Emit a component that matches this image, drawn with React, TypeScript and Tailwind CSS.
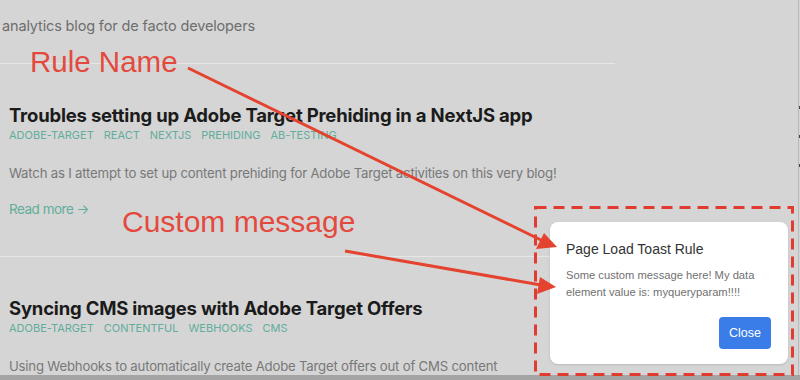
const posts = [
  {
    title: "Troubles setting up Adobe Target Prehiding in a NextJS app",
    tags: ["adobe-target", "react", "nextjs", "prehiding", "ab-testing"],
    summary:
      "Watch as I attempt to set up content prehiding for Adobe Target activities on this very blog!",
    more: true,
  },
  {
    title: "Syncing CMS images with Adobe Target Offers",
    tags: ["adobe-target", "contentful", "webhooks", "cms"],
    summary:
      "Using Webhooks to automatically create Adobe Target offers out of CMS content",
    more: false,
  },
];

function Post({ post }: { post: (typeof posts)[number] }) {
  return (
    <article className="pl-[9px] pt-[39px]">
      <h2 className="text-[18.5px] leading-[24px] font-bold text-[#1b1b1b] tracking-[-0.2px]">
        {post.title}
      </h2>
      <div className="flex gap-[10px] text-[11px] leading-[16px] uppercase text-[#62ad9b]">
        {post.tags.map((tag) => (
          <span key={`tag-${tag}`}>{tag}</span>
        ))}
      </div>
      <p className="mt-[20px] text-[13.2px] leading-[20px] tracking-[-0.2px] text-[#787878]">
        {post.summary}
      </p>
      {post.more && (
        <a className="mt-[16px] block text-[13.5px] leading-[20px] tracking-[-0.5px] text-[#62ad9b]">
          Read more →
        </a>
      )}
    </article>
  );
}

function Toast() {
  return (
    <div
      className="absolute left-[550px] top-[222px] flex h-[142px] w-[238px] flex-col rounded-[8px] bg-white pl-[16px] pr-[17px] pt-[18px] pb-[15px] shadow-sm"
      style={{ fontFamily: '"Liberation Sans", Arial, sans-serif' }}
    >
      <h3 className="text-[14px] leading-[18px] text-[#333333]">
        Page Load Toast Rule
      </h3>
      <p className="mt-[9px] text-[11.2px] leading-[16.5px] text-[#707070]">
        Some custom message here! My data element value is: myqueryparam!!!!
      </p>
      <div className="mt-auto flex justify-end">
        <button className="h-[32px] w-[52px] rounded-[4px] bg-[#3a7de9] text-[12.5px] text-white">
          Close
        </button>
      </div>
    </div>
  );
}

function Annotations() {
  return (
    <>
      <svg
        className="pointer-events-none absolute left-0 top-0"
        width="800"
        height="380"
        viewBox="0 0 800 380"
      >
        <rect
          x="535.5"
          y="207.5"
          width="257"
          height="167"
          fill="none"
          stroke="#e23b2f"
          strokeWidth="3"
          strokeDasharray="11 7"
        />
        <line x1="188" y1="68" x2="543" y2="241" stroke="#e4432f" strokeWidth="3" />
        <polygon points="557,247 536,249 544,233" fill="#e4432f" />
        <line x1="345" y1="251" x2="541" y2="285" stroke="#e4432f" strokeWidth="3" />
        <polygon points="556,287 537,294 540,277" fill="#e4432f" />
      </svg>
      <span
        className="absolute left-[30px] top-[45px] text-[29.5px] leading-[34px] text-[#e4493e]"
        style={{ fontFamily: '"Liberation Sans", Arial, sans-serif' }}
      >
        Rule Name
      </span>
      <span
        className="absolute left-[122px] top-[205px] text-[30px] leading-[34px] text-[#e4493e]"
        style={{ fontFamily: '"Liberation Sans", Arial, sans-serif' }}
      >
        Custom message
      </span>
    </>
  );
}

export default function App() {
  return (
    <div
      className="relative flex h-[380px] w-[800px] flex-col overflow-hidden bg-[#d5d5d5]"
      style={{ fontFamily: "Inter, sans-serif" }}
    >
      <div className="flex flex-1 overflow-hidden">
        <main className="w-[615px] shrink-0">
          <p className="pl-[2px] pt-[16px] text-[14.5px] leading-[20px] tracking-[-0.15px] text-[#6e6e6e]">
            analytics blog for de facto developers
          </p>
          <hr className="mt-[27px] border-t border-[#e6e6e6]" />
          <Post post={posts[0]} />
          <hr className="mt-[37px] border-t border-[#e6e6e6]" />
          <Post post={posts[1]} />
        </main>
        <div className="flex-1" />
        <aside className="flex w-[2px] flex-col gap-[26px] border-l border-[#b9b9b9] pt-[106px]">
          <span className="h-[3px] w-[2px] bg-[#444]" />
          <span className="h-[3px] w-[2px] bg-[#444]" />
          <span className="h-[3px] w-[2px] bg-[#444]" />
        </aside>
      </div>
      <div className="h-[5px] bg-[#a4a4a4]" />
      <Toast />
      <Annotations />
    </div>
  );
}
